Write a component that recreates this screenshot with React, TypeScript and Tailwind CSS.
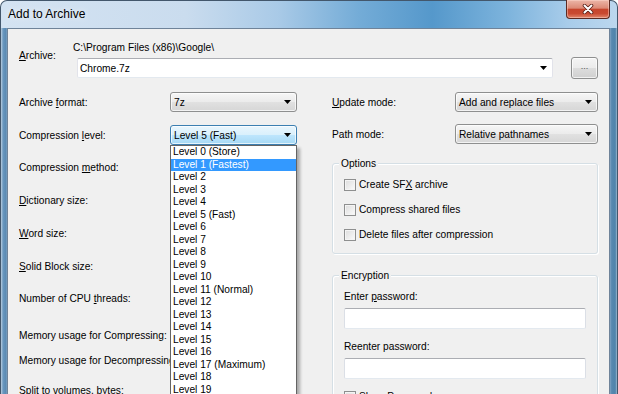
import clsx from 'clsx';
import type { ReactNode } from 'react';

const levels = [
  'Level 0 (Store)', 'Level 1 (Fastest)', 'Level 2', 'Level 3', 'Level 4', 'Level 5 (Fast)',
  'Level 6', 'Level 7', 'Level 8', 'Level 9', 'Level 10', 'Level 11 (Normal)', 'Level 12',
  'Level 13', 'Level 14', 'Level 15', 'Level 16', 'Level 17 (Maximum)', 'Level 18', 'Level 19',
  'Level 20', 'Level 21', 'Level 22 (Ultra)',
];

function Arrow() {
  return (
    <svg width="7" height="4" viewBox="0 0 7 4" className="shrink-0">
      <path d="M0 0h7L3.5 4z" fill="#000" />
    </svg>
  );
}

function Combo({ text, className, open }: { text: string; className?: string; open?: boolean }) {
  return (
    <div
      className={clsx(
        'flex h-[20px] items-center justify-between rounded-[3px] border pl-[3px] pr-[5px] shadow-[inset_0_0_0_1px_rgba(255,255,255,0.7)]',
        open
          ? 'border-[#3c7fb1] bg-[linear-gradient(to_bottom,#eaf6fd_0%,#d9f0fc_50%,#bee6fd_50%,#a7d9f5_100%)]'
          : 'border-[#8e8f8f] bg-[linear-gradient(to_bottom,#f6f6f6_0%,#ebebeb_50%,#e1e1e1_50%,#d6d6d6_100%)]',
        className,
      )}
    >
      <span className="whitespace-nowrap">{text}</span>
      <Arrow />
    </div>
  );
}

function Check({ children }: { children: ReactNode }) {
  return (
    <div className="flex h-[13px] items-center gap-[3px]">
      <div className="h-[12px] w-[12px] shrink-0 border border-[#8e8f8f] bg-[linear-gradient(135deg,#dcdcdc,#fbfbfb)] shadow-[inset_0_0_0_1px_#f4f4f4]" />
      <span className="whitespace-nowrap">{children}</span>
    </div>
  );
}

function Group({ title, className, children }: { title: string; className?: string; children: ReactNode }) {
  return (
    <div className={clsx('relative rounded-[3px] border border-[#d5dfe5] px-[11px] shadow-[inset_1px_1px_0_#fff,1px_1px_0_#fff]', className)}>
      <span className="absolute -top-[7px] left-[6px] bg-[#f0f0f0] px-[2px]">{title}</span>
      {children}
    </div>
  );
}

function TextBox() {
  return <div className="h-[21px] w-full rounded-[2px] border border-[#abadb3] border-x-[#dbdfe6] border-b-[#e3e9ef] bg-white" />;
}

function LeftRow({ label, children }: { label: ReactNode; children?: ReactNode }) {
  return (
    <div className="flex h-[20px] items-center">
      <div className="w-[151px] whitespace-nowrap">{label}</div>
      {children}
    </div>
  );
}

export default function App() {
  return (
    <div className="h-[394px] w-[618px] overflow-hidden bg-white font-['Liberation_Sans',Arial,sans-serif] text-[10.2px] leading-[13px] text-black">
      <div className="flex h-full flex-col rounded-t-[7px] border border-b-0 border-[#43576c] bg-[linear-gradient(to_right,#d4e3f2_0%,#cadcee_30%,#a9cae7_45%,#74acd7_58%,#5598cb_70%,#7cb3dc_82%,#a8ccea_92%,#bcd7ee_100%)]">
        {/* title bar */}
        <div className="flex h-[27px] shrink-0 items-start">
          <div className="pl-[7px] pt-[6px] text-[12px] leading-[15px] [text-shadow:0_0_6px_rgba(255,255,255,0.9)]">Add to Archive</div>
          <div className="ml-auto mr-[7px] -mt-px flex h-[19px] w-[44px] items-center justify-center rounded-b-[4px] border border-t-0 border-[#5c2a22] bg-[linear-gradient(to_bottom,#ecb6a8_0%,#dc8a76_45%,#c6452d_52%,#c94a31_75%,#e2876c_100%)] shadow-[inset_0_0_0_1px_rgba(255,220,210,0.45)]">
            <svg width="12" height="10" viewBox="0 0 12 10">
              <path d="M2.5 1.5l7 7M9.5 1.5l-7 7" stroke="#5a1f16" strokeWidth="3.6" strokeLinecap="round" />
              <path d="M2.5 1.5l7 7M9.5 1.5l-7 7" stroke="#fff" strokeWidth="2" strokeLinecap="round" />
            </svg>
          </div>
        </div>

        <div className="flex flex-1">
          <div className="w-[6px] bg-[linear-gradient(to_right,#b9cde0,#6a98bf_35%,#5a8ab3_80%,#7fa3c2)]" />

          {/* client area */}
          <div className="flex-1 border border-b-0 border-[#6f8399] bg-[#f0f0f0] px-[11px] pt-[12px]">
            <div className="flex">
              <div className="w-[54px] pt-[8px]">
                <u>A</u>rchive:
              </div>
              <div className="flex-1">
                <div className="whitespace-nowrap">C:\Program Files (x86)\Google\</div>
                <div className="mt-[3px] flex items-center">
                  <div className="ml-[4px] flex h-[20px] w-[476px] items-center justify-between rounded-[2px] border border-[#abadb3] border-x-[#e2e3ea] border-b-[#e3e9ef] bg-white pl-[2px] pr-[5px]">
                    <span>Chrome.7z</span>
                    <Arrow />
                  </div>
                  <div className="ml-auto flex h-[22px] w-[27px] items-center justify-center rounded-[3px] border border-[#8e8f8f] bg-[linear-gradient(to_bottom,#f4f4f4_0%,#ebebeb_50%,#dddddd_50%,#d0d0d0_100%)] pb-[3px] text-[9px] text-[#555] shadow-[inset_0_0_0_1px_rgba(255,255,255,0.7)]">
                    ...
                  </div>
                </div>
              </div>
            </div>

            <div className="mt-[13px] flex gap-[35px]">
              {/* left column */}
              <div className="flex w-[278px] flex-col">
                <LeftRow label={<>Archive <u>f</u>ormat:</>}>
                  <Combo text="7z" className="w-[127px]" />
                </LeftRow>
                <div className="mt-[13px]">
                  <LeftRow label={<>Compression <u>l</u>evel:</>}>
                    <div className="relative z-10 w-[127px]">
                      <Combo text="Level 5 (Fast)" open />
                      <div className="absolute left-0 top-full w-full border border-[#646464] bg-white shadow-[3px_3px_3px_rgba(0,0,0,0.3)]">
                        {levels.map((l, i) => (
                          <div
                            key={l}
                            className={clsx(
                              'h-[12.5px] whitespace-nowrap pl-[2px] leading-[12.5px]',
                              i === 1 && 'bg-[#3399ff] text-white',
                            )}
                          >
                            {l}
                          </div>
                        ))}
                      </div>
                    </div>
                  </LeftRow>
                </div>
                <div className="mt-[12px]">
                  <LeftRow label={<>Compression <u>m</u>ethod:</>} />
                </div>
                <div className="mt-[13px]">
                  <LeftRow label={<><u>D</u>ictionary size:</>} />
                </div>
                <div className="mt-[13px]">
                  <LeftRow label={<><u>W</u>ord size:</>} />
                </div>
                <div className="mt-[13px]">
                  <LeftRow label={<><u>S</u>olid Block size:</>} />
                </div>
                <div className="mt-[12px]">
                  <LeftRow label={<>Number of CPU <u>t</u>hreads:</>} />
                </div>
                <div className="mt-[21px] whitespace-nowrap">Memory usage for Compressing:</div>
                <div className="mt-[12px] whitespace-nowrap">Memory usage for Decompressing:</div>
                <div className="mt-[17px] whitespace-nowrap">Split to volumes, bytes:</div>
              </div>

              {/* right column */}
              <div className="flex w-[266px] flex-col">
                <div className="flex h-[20px] items-center">
                  <div className="w-[123px]">
                    <u>U</u>pdate mode:
                  </div>
                  <Combo text="Add and replace files" className="w-[143px]" />
                </div>
                <div className="mt-[12px] flex h-[20px] items-center">
                  <div className="w-[123px]">Path mode:</div>
                  <Combo text="Relative pathnames" className="w-[143px]" />
                </div>

                <Group title="Options" className="mt-[19px] flex h-[91px] flex-col gap-[12px] pt-[14px]">
                  <Check>
                    Create SF<u>X</u> archive
                  </Check>
                  <Check>Compress shared files</Check>
                  <Check>Delete files after compression</Check>
                </Group>

                <Group title="Encryption" className="mt-[21px] h-[140px] pt-[14px]">
                  <div>
                    Enter <u>p</u>assword:
                  </div>
                  <div className="mt-[5px]">
                    <TextBox />
                  </div>
                  <div className="mt-[11px]">Reenter password:</div>
                  <div className="mt-[5px]">
                    <TextBox />
                  </div>
                  <div className="mt-[11px]">
                    <Check>Show Password</Check>
                  </div>
                </Group>
              </div>
            </div>
          </div>

          <div className="w-[7px] bg-[linear-gradient(to_right,#7fa3c2,#5688af_25%,#4f84ab_75%,#9bb8d0)]" />
        </div>
      </div>
    </div>
  );
}
